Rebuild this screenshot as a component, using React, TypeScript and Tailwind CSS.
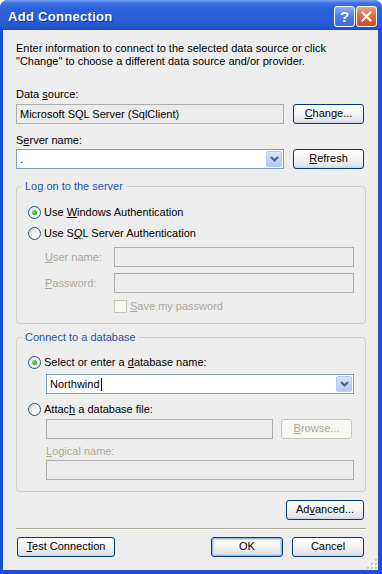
import type { ReactNode } from 'react'

const face = "font-['Liberation_Sans',Arial,sans-serif]"

// access-key underline, as in the classic Win32 dialogs
function U({ children }: { children: ReactNode }) {
  return <span className="underline decoration-1 underline-offset-[1px]">{children}</span>
}

function XpButton({
  children,
  className = '',
  primary = false,
  disabled = false,
}: {
  children: ReactNode
  className?: string
  primary?: boolean
  disabled?: boolean
}) {
  const look = disabled
    ? 'border-[#c9c7ba] bg-[#f6f6f3] text-[#aca899]'
    : primary
      ? 'border-[#003c74] bg-[linear-gradient(180deg,#ffffff_0%,#f4f4f2_45%,#e4e6ec_85%,#cdd3e0_100%)] text-black shadow-[inset_0_0_0_1px_#9cbcf0,inset_0_0_0_2px_#c4d6f6]'
      : 'border-[#003c74] bg-[linear-gradient(180deg,#ffffff_0%,#f4f4f2_45%,#e4e6ec_85%,#cdd3e0_100%)] text-black'
  return (
    <div
      className={`flex h-[20px] shrink-0 items-center justify-center rounded-[3px] border text-[11px] leading-none ${look} ${className}`}
    >
      <span className="-mt-[1px]">{children}</span>
    </div>
  )
}

function DropArrow() {
  return (
    <div className="my-[1px] mr-[1px] flex w-[16px] shrink-0 items-center justify-center rounded-[2px] border border-[#b4c8f2] bg-[linear-gradient(180deg,#dbe6fe_0%,#c4d5fc_50%,#b2c6f4_100%)]">
      <svg width="9" height="6" viewBox="0 0 9 6">
        <path d="M1 1 L4.5 4.5 L8 1" fill="none" stroke="#4d6185" strokeWidth="2" />
      </svg>
    </div>
  )
}

function Combo({ className = '', children }: { className?: string; children?: ReactNode }) {
  return (
    <div className={`flex h-[20px] shrink-0 border border-[#7f9db9] bg-white ${className}`}>
      <div className="flex flex-1 items-center pl-[3px] text-[11px] leading-none text-black">{children}</div>
      <DropArrow />
    </div>
  )
}

function Box({ className = '', children }: { className?: string; children?: ReactNode }) {
  return (
    <div
      className={`flex h-[20px] shrink-0 items-center border border-[#aeaeae] bg-[#ececec] pl-[3px] text-[11px] leading-none ${className}`}
    >
      {children}
    </div>
  )
}

function Radio({ checked = false, children }: { checked?: boolean; children: ReactNode }) {
  return (
    <div className="flex h-[13px] items-center">
      <span className="flex h-[13px] w-[13px] shrink-0 items-center justify-center rounded-full border border-[#1c5180] bg-[linear-gradient(135deg,#dcdcd7_0%,#f6f6f3_50%,#ffffff_100%)]">
        {checked && (
          <span className="h-[5px] w-[5px] rounded-full bg-[radial-gradient(circle_at_35%_35%,#7fe07b_0%,#3bb53a_50%,#1c8d1b_100%)]" />
        )}
      </span>
      <span className="ml-[3px] text-[11px] leading-[13px] text-black">{children}</span>
    </div>
  )
}

function Group({ title, children }: { title: string; children: ReactNode }) {
  return (
    <fieldset className="m-0 min-w-0 rounded-[4px] border border-[#d0d0c6] p-0">
      <legend className="ml-[5px] px-[3px] text-[11px] leading-[13px] text-[#2553a8]">{title}</legend>
      {children}
    </fieldset>
  )
}

function Grip() {
  const dots = [
    [9, 1],
    [9, 5],
    [5, 5],
    [9, 9],
    [5, 9],
    [1, 9],
  ]
  return (
    <svg width="12" height="12" viewBox="0 0 12 12" className="shrink-0">
      {dots.map(([x, y]) => (
        <g key={`${x}-${y}`}>
          <rect x={x + 1} y={y + 1} width="2" height="2" fill="#ffffff" />
          <rect x={x} y={y} width="2" height="2" fill="#c4c2b8" />
        </g>
      ))}
    </svg>
  )
}

export default function App() {
  return (
    <div className={`flex h-[574px] w-[382px] flex-col overflow-hidden rounded-t-[8px] bg-[#1d50cf] ${face}`}>
      {/* title bar */}
      <div className="flex h-[30px] shrink-0 items-center bg-[linear-gradient(180deg,#7aa6f4_0%,#3d72e6_10%,#2a60d9_30%,#285dd6_70%,#2456d0_90%,#1a48c0_100%)] pl-[8px] pr-[5px]">
        <span className="mt-[3px] text-[13px] leading-none font-bold tracking-[0.3px] text-white [text-shadow:1px_1px_0_#10308e]">
          Add Connection
        </span>
        <div className="mt-[3px] ml-auto flex gap-[1px]">
          <div className="flex h-[21px] w-[21px] items-center justify-center rounded-[3px] border border-white bg-[linear-gradient(180deg,#8cb2f8_0%,#4f80ea_45%,#3a6ae0_100%)]">
            <span className="text-[15px] leading-none font-bold text-white">?</span>
          </div>
          <div className="flex h-[21px] w-[21px] items-center justify-center rounded-[3px] border border-white bg-[linear-gradient(180deg,#f0a58c_0%,#e26a45_45%,#cf4a25_100%)]">
            <svg width="11" height="11" viewBox="0 0 11 11">
              <path d="M1.5 1.5 L9.5 9.5 M9.5 1.5 L1.5 9.5" stroke="#ffffff" strokeWidth="2.2" strokeLinecap="square" />
            </svg>
          </div>
        </div>
      </div>

      {/* client area */}
      <div className="mr-[4px] mb-[4px] ml-[3px] flex flex-1 flex-col bg-[#ededed] pt-[12px] pr-[12px] pl-[13px] text-[11px] text-black">
        <p className="leading-[13px]">
          Enter information to connect to the selected data source or click
          <br />
          "Change" to choose a different data source and/or provider.
        </p>

        <div className="mt-[20px] leading-[13px]">
          Data <U>s</U>ource:
        </div>
        <div className="mt-[3px] flex items-center">
          <Box className="w-[268px]">Microsoft SQL Server (SqlClient)</Box>
          <XpButton className="ml-[9px] w-[71px]">
            <U>C</U>hange...
          </XpButton>
        </div>

        <div className="mt-[10px] leading-[13px]">
          S<U>e</U>rver name:
        </div>
        <div className="mt-[2px] flex items-center">
          <Combo className="w-[268px]">.</Combo>
          <XpButton className="ml-[9px] w-[71px]">
            <U>R</U>efresh
          </XpButton>
        </div>

        <div className="mt-[11px]">
          <Group title="Log on to the server">
            <div className="flex flex-col pt-[13px] pb-[10px] pl-[11px]">
              <Radio checked>
                Use <U>W</U>indows Authentication
              </Radio>
              <div className="mt-[8px]">
                <Radio>
                  Use S<U>Q</U>L Server Authentication
                </Radio>
              </div>
              <div className="mt-[7px] flex items-center pl-[17px] text-[#aca899]">
                <span className="w-[69px]">
                  <U>U</U>ser name:
                </span>
                <Box className="w-[240px]" />
              </div>
              <div className="mt-[6px] flex items-center pl-[17px] text-[#aca899]">
                <span className="w-[69px]">
                  <U>P</U>assword:
                </span>
                <Box className="w-[240px]" />
              </div>
              <div className="mt-[7px] flex items-center pl-[86px] text-[#aca899]">
                <span className="h-[13px] w-[13px] border border-[#cac8bb] bg-[#f5f5f2]" />
                <span className="ml-[3px] leading-[13px]">
                  <U>S</U>ave my password
                </span>
              </div>
            </div>
          </Group>
        </div>

        <div className="mt-[7px]">
          <Group title="Connect to a database">
            <div className="flex flex-col pt-[12px] pb-[11px] pl-[11px]">
              <Radio checked>
                Select or enter a <U>d</U>atabase name:
              </Radio>
              <div className="mt-[5px] pl-[18px]">
                <Combo className="w-[308px]">
                  Northwind
                  <span className="ml-[1px] h-[13px] w-[1px] bg-black" />
                </Combo>
              </div>
              <div className="mt-[9px]">
                <Radio>
                  Attac<U>h</U> a database file:
                </Radio>
              </div>
              <div className="mt-[3px] flex items-center pl-[18px]">
                <Box className="w-[227px]" />
                <XpButton disabled className="ml-[8px] w-[71px]">
                  <U>B</U>rowse...
                </XpButton>
              </div>
              <div className="mt-[6px] pl-[18px] leading-[13px] text-[#aca899]">
                <U>L</U>ogical name:
              </div>
              <div className="mt-[2px] pl-[18px]">
                <Box className="w-[308px]" />
              </div>
            </div>
          </Group>
        </div>

        <div className="mt-[8px] flex justify-end pr-[2px]">
          <XpButton className="w-[78px]">
            Ad<U>v</U>anced...
          </XpButton>
        </div>

        <div className="mt-[8px] h-[1px] bg-[#aca899] shadow-[0_1px_0_#ffffff]" />

        <div className="mt-[8px] flex items-center pr-[2px] pl-[1px]">
          <XpButton className="w-[98px]">
            <U>T</U>est Connection
          </XpButton>
          <XpButton primary className="ml-auto w-[72px]">
            OK
          </XpButton>
          <XpButton className="ml-[9px] w-[72px]">Cancel</XpButton>
        </div>

        <div className="mt-auto -mr-[12px] flex justify-end">
          <Grip />
        </div>
      </div>
    </div>
  )
}
